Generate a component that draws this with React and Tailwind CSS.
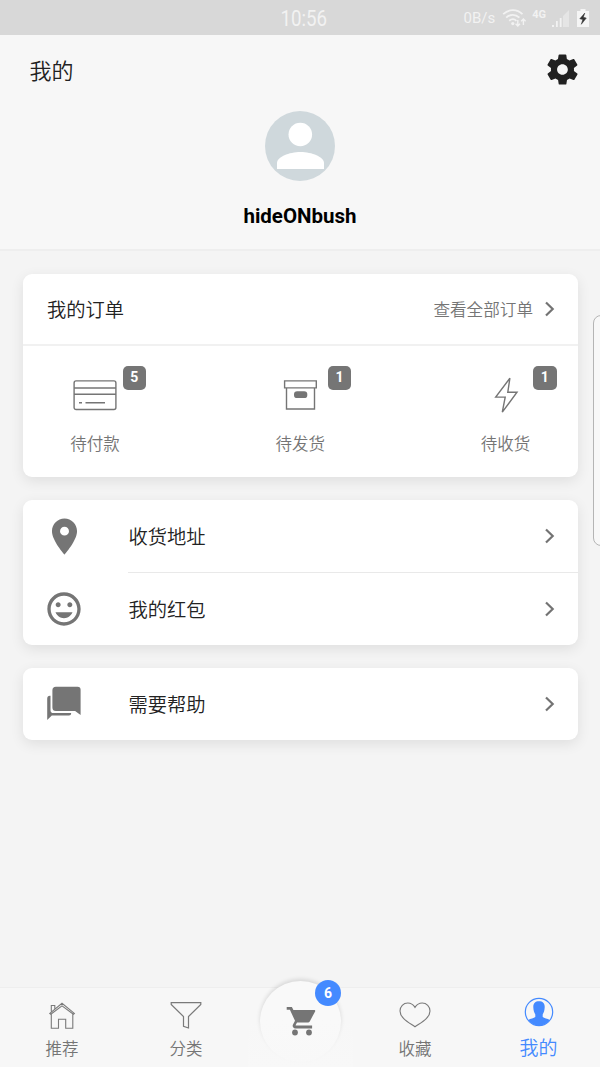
import React from 'react';
import { IoMdSettings } from 'react-icons/io';
import { MdLocationOn, MdMood } from 'react-icons/md';

const CARD = 'flex flex-col rounded-[9px] bg-white shadow-[0_4px_14px_rgba(0,0,0,0.09)]';

function Chevron() {
  return (
    <svg className="h-[16px] w-[10px] shrink-0" viewBox="0 0 10 16" fill="none" stroke="#737373" strokeWidth="2.2">
      <path d="M1 1.500 7.700 8 1 14.500" />
    </svg>
  );
}

function CardIcon() {
  return (
    <svg className="h-[40px] w-[44px]" viewBox="0 0 44 40" fill="none" stroke="#757575" strokeWidth="1.4">
      <rect x="1.1" y="5.9" width="41.8" height="28.6" rx="2" />
      <path d="M1 13h42M1 19.200h42M6 27.700h3M12.500 27.700h19.500" />
    </svg>
  );
}

function BoxIcon() {
  return (
    <svg className="h-[40px] w-[44px]" viewBox="0 0 44 40" fill="none" stroke="#757575" strokeWidth="1.4">
      <path d="M6.600 5.900h31.700v7H6.600zM8.500 13v21h28V13" />
      <rect x="16" y="16.3" width="13.3" height="6.8" rx="3.2" fill="#757575" stroke="none" />
    </svg>
  );
}

function BoltIcon() {
  return (
    <svg className="h-[40px] w-[44px]" viewBox="0 0 44 40" fill="none" stroke="#757575" strokeWidth="1.4">
      <path d="M25.900 3.100 11.700 22.100h9.500L18.300 37.200l14.700-20h-9.200z" />
    </svg>
  );
}

function ChatIcon() {
  return (
    <svg className="h-[36px] w-[36px]" viewBox="0 0 36 36" fill="#757575">
      <path d="M9.900.8h21.700a3 3 0 0 1 3 3V29l-5.500-4H9.900a3.500 3.500 0 0 1-3.500-3.500V4.300A3.500 3.500 0 0 1 9.900.8z" />
      <path d="M4.500 9.800v14.400a2.800 2.800 0 0 0 2.800 2.800h17.900v.3a2.200 2.200 0 0 1-2.200 2.200H5.800L1.200 34V12.800a3 3 0 0 1 3.300-3z" />
    </svg>
  );
}

function CartIcon() {
  return (
    <svg className="h-[30px] w-[30px]" viewBox="0 0 30 30" fill="#757575">
      <path d="M.700 1h5.200l1.500 3h20.800c.9 0 1.300.7.900 1.500l-5.100 9.400c-.5 1-1.400 1.500-2.500 1.500H11L9.700 19c-.2.400 0 .6.4.6h16v2.800H9.300c-2.100 0-3.300-2.200-2.300-4l2-3.600L3.900 3.800H.700z" />
      <circle cx="9" cy="26.500" r="2.900" />
      <circle cx="23" cy="26.500" r="2.900" />
    </svg>
  );
}

function Order({ icon, label, count }) {
  return (
    <div className="relative flex w-[72px] flex-col items-center">
      {icon}
      <span className="mt-[16px] text-[16.5px] leading-[24px] text-[#757575]">{label}</span>
      <span className="absolute top-[-9px] left-[63.5px] flex h-[23.5px] w-[23.5px] items-center justify-center rounded-[5px] bg-[#757575] pb-px font-[Roboto] text-[14px] leading-none font-bold text-white">
        {count}
      </span>
    </div>
  );
}

function Row({ icon, label, divider }) {
  return (
    <div className={`flex items-center ${divider ? 'h-[73px]' : 'h-[72px]'}`}>
      <div className="flex w-[82px] justify-center text-[#757575]">{icon}</div>
      <div className={`ml-[23px] flex h-full flex-1 items-center justify-between pr-[23px] pl-[0.5px] ${divider ? 'border-b border-[#e9e9e9]' : ''}`}>
        <span className="text-[19.3px] text-[#222]">{label}</span>
        <Chevron />
      </div>
    </div>
  );
}

function Tab({ icon, label }) {
  return (
    <div className="flex w-[124px] flex-col items-center text-[#757575]">
      {icon}
      <span className="mt-[5px] text-[16.5px] leading-[24px]">{label}</span>
    </div>
  );
}

function StatusBar() {
  return (
    <div className="relative flex h-[35px] shrink-0 items-center justify-end bg-[#d8d8d8] pr-[11px] font-[Roboto] font-normal text-[#f2f2f2]">
      <span className="absolute top-[6px] left-[276.5px] origin-center scale-x-[0.87] text-[21.5px] leading-[26px]">10:56</span>
      <span className="mt-[2px] mr-[7px] text-[15px] leading-none">0B/s</span>
      <svg className="mr-[5px] h-[20px] w-[25px]" viewBox="0 0 25 20" fill="none" stroke="#f2f2f2" strokeWidth="1.8">
        <path d="M1.200 6.200C7 .8 15 .8 20.500 6.200M4.200 9.600c4-3.700 9.300-3.700 13.200 0M7.200 12.800c2.300-2 5.100-2 7.200 0" />
        <circle cx="10.8" cy="15.6" r="1.6" fill="#f2f2f2" stroke="none" />
        <path strokeWidth="1.4" d="M15.800 12v6M13.600 15.700l2.200 2.300 2.200-2.300M21.400 17v-6M19.200 13.300l2.200-2.300 2.200 2.300" />
      </svg>
      <span className="mr-[6px] self-start pt-[9px] text-[11px] leading-none font-bold">4G</span>
      <svg className="mr-[7px] h-[18px] w-[18px]" viewBox="0 0 18 18" fill="#f2f2f2">
        <path d="M0 18h2v-2H0zM4 18h1.800v-6H4zM7.800 18h1.800V9H7.800z" />
        <path opacity=".5" d="M11 18h6V1l-6 6z" />
      </svg>
      <svg className="h-[18px] w-[12px]" viewBox="0 0 12 18">
        <path d="M3.500 0h5v2H12v16H0V2h3.500z" fill="#f5f5f5" />
        <path d="m7.800 4-5 5.800 3 .7-1.500 4.800 5-6.200-3-.8z" fill="#333" stroke="#333" strokeWidth=".5" />
      </svg>
    </div>
  );
}

function HomeIcon() {
  return (
    <svg className="h-[30px] w-[32px]" viewBox="0 0 32 30" fill="none" stroke="#7a7a7a" strokeWidth="1.1">
      <path d="M3.800 12.400 16 2.300l12.400 10.100-1 .9L16 4.900 4.800 13.300zM5.300 10.500V4.500h3.500v3.300M5.300 13v14.300h7.200v-9h7.200v9h7.100V13" />
    </svg>
  );
}

function FunnelIcon() {
  return (
    <svg className="h-[30px] w-[32px]" viewBox="0 0 32 30" fill="none" stroke="#7a7a7a" strokeWidth="1.2">
      <path d="M1.200 1.600h29.600v1.900L18.500 15.500v11.500l-5-1.700v-9.800L1.200 3.500z" />
    </svg>
  );
}

function HeartIcon() {
  return (
    <svg className="h-[30px] w-[32px]" viewBox="0 0 32 30" fill="none" stroke="#7a7a7a" strokeWidth="1.1">
      <path d="M16 6.400C14 3.200 11.500 2 8.800 2 4.400 2 1 5.500 1 10c0 7 9 11.500 15 15.800C22 21.500 31 17 31 10c0-4.500-3.400-8-7.800-8C20.500 2 18 3.200 16 6.400z" />
    </svg>
  );
}

function PersonIcon() {
  return (
    <svg className="h-[30px] w-[30px]" viewBox="0 0 30 30">
      <circle cx="15" cy="15" r="13.7" fill="none" stroke="#448aff" strokeWidth="1.2" />
      <path d="M15 4.300c3.900 0 5.900 2.200 5.700 5.900-.1 3.500-1 5.400-2 7.200v2.600c1.200 1.300 5 1.500 7 2.900A13.700 13.700 0 0 1 15 28.700 13.700 13.700 0 0 1 4.300 22.900c2-1.400 5.800-1.600 7-2.900v-2.600c-1-1.800-1.900-3.700-2-7.200-.2-3.700 1.800-5.900 5.700-5.900z" fill="#448aff" />
    </svg>
  );
}

export default function App() {
  return (
    <div className="relative flex h-[1067px] w-[600px] flex-col overflow-hidden bg-[#f4f4f4] font-['Noto_Sans_CJK_SC',sans-serif] font-[350]">
      <StatusBar />
      <header className="flex h-[216px] shrink-0 flex-col border-b-2 border-[#eeeeee] bg-[#f7f7f7]">
        <div className="flex h-[69px] items-center justify-between pr-[19px] pl-[29.5px]">
          <h1 className="text-[22px] text-[#222]">我的</h1>
          <IoMdSettings size={37} color="#212121" />
        </div>
        <div className="mt-[7px] flex flex-col items-center">
          <svg className="h-[70px] w-[70px]" viewBox="0 0 70 70">
            <circle cx="35" cy="35" r="35" fill="#cfd8dc" />
            <circle cx="35.3" cy="23.5" r="11.8" fill="#fff" />
            <path d="M12 58v-6c0-6 12-11 23.500-11s23.500 5 23.500 11v6z" fill="#fff" />
          </svg>
          <div className="mt-[21px] font-[Roboto] text-[20.5px] leading-[28px] font-bold text-black">hideONbush</div>
        </div>
      </header>

      <main className="flex flex-1 flex-col gap-[23px] pt-[23px] pr-[22.5px] pl-[23px]">
        <section className={`${CARD} h-[203px]`}>
          <div className="flex h-[72px] items-center border-b-2 border-[#f1f1f1] pr-[23px] pl-[24px]">
            <h2 className="text-[19.3px] text-[#222]">我的订单</h2>
            <span className="mr-[11.5px] ml-auto text-[16.6px] text-[#757575]">查看全部订单</span>
            <Chevron />
          </div>
          <div className="flex justify-between px-[36px] pt-[29px]">
            <Order icon={<CardIcon />} label="待付款" count="5" />
            <Order icon={<BoxIcon />} label="待发货" count="1" />
            <Order icon={<BoltIcon />} label="待收货" count="1" />
          </div>
        </section>
        <section className={CARD}>
          <Row icon={<MdLocationOn size={43} />} label="收货地址" divider />
          <Row icon={<MdMood size={40} />} label="我的红包" />
        </section>
        <section className={CARD}>
          <Row icon={<ChatIcon />} label="需要帮助" />
        </section>
      </main>

      <div className="absolute top-[315px] left-[593px] h-[231px] w-[20px] rounded-[8px] border border-[#b5b5b5] bg-[#f8f8f8]" />

      <nav className="relative flex h-[80px] shrink-0 border-t border-[#eeeeee] bg-[#f7f7f7] pt-[13px]">
        <Tab icon={<HomeIcon />} label="推荐" />
        <Tab icon={<FunnelIcon />} label="分类" />
        <div className="relative w-[105px]">
          <div className="absolute top-[-20px] left-[12px] h-[81px] w-[81px] rounded-full bg-[#f9f9f9] shadow-[0_-2px_4px_rgba(0,0,0,0.12)]" />
          <div className="absolute top-[18px] left-0 h-[49px] w-full bg-linear-to-b from-[#f8f8f8]/0 to-[#f8f8f8]" />
          <div className="absolute top-[5px] left-[37.5px]">
            <CartIcon />
          </div>
          <span className="absolute top-[-21px] left-[67px] flex h-[26px] w-[26px] items-center justify-center rounded-full bg-[#448aff] font-[Roboto] text-[14px] leading-none font-bold text-white">6</span>
        </div>
        <Tab icon={<HeartIcon />} label="收藏" />
        <div className="-mt-[4px] flex w-[123px] flex-col items-center text-[#448aff]">
          <PersonIcon />
          <span className="mt-[7px] text-[19px] leading-[26px]">我的</span>
        </div>
      </nav>
    </div>
  );
}
